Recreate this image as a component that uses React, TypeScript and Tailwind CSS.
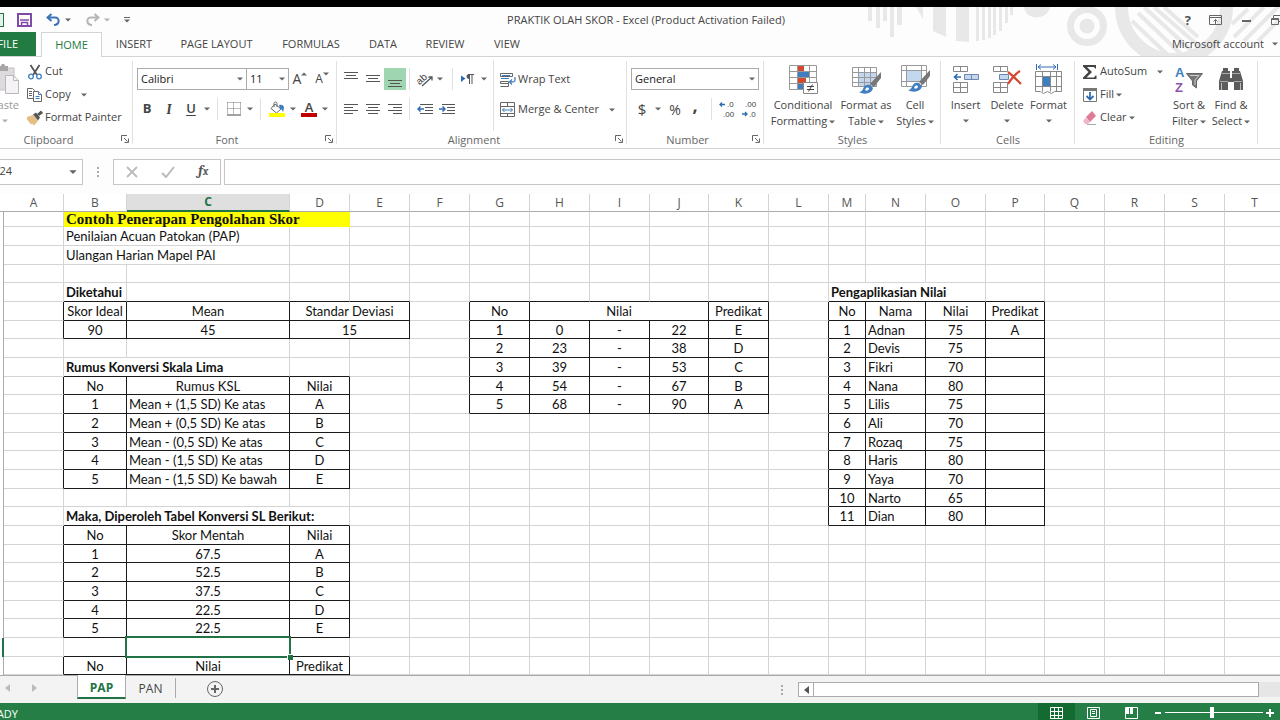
import { useState } from 'react';
import type { ReactNode } from 'react';
import clsx from 'clsx';

/* ---------- sheet data ---------- */

interface Cell {
  text: string;
  span?: number;
  bold?: boolean;
  left?: boolean;
  title?: boolean;
}

interface Box {
  top: number;
  left: number;
  rows: number;
  cols: number;
}

const COLUMNS = [
  { name: 'A', width: 60 },
  { name: 'B', width: 63 },
  { name: 'C', width: 163 },
  { name: 'D', width: 60 },
  { name: 'E', width: 60 },
  { name: 'F', width: 60 },
  { name: 'G', width: 60 },
  { name: 'H', width: 60 },
  { name: 'I', width: 60 },
  { name: 'J', width: 59 },
  { name: 'K', width: 60 },
  { name: 'L', width: 60 },
  { name: 'M', width: 37 },
  { name: 'N', width: 60 },
  { name: 'O', width: 60 },
  { name: 'P', width: 59 },
  { name: 'Q', width: 60 },
  { name: 'R', width: 60 },
  { name: 'S', width: 60 },
  { name: 'T', width: 60 },
];

const ROW_COUNT = 25;
const SELECTED = { row: 24, col: 2 };

const cells: Record<string, Cell> = {};
const boxes: Box[] = [];

const put = (row: number, col: number, cell: Cell) => {
  cells[`${row}:${col}`] = cell;
};

// writes a bordered block; columns listed in leftCols are left aligned below the header
const putTable = (top: number, left: number, rows: string[][], leftCols: number[] = []) => {
  boxes.push({ top, left, rows: rows.length, cols: rows[0].length });
  rows.forEach((row, r) =>
    row.forEach((text, c) => {
      if (text) put(top + r, left + c, { text, left: r > 0 && leftCols.includes(c) });
    })
  );
};

put(1, 1, { text: 'Contoh Penerapan Pengolahan Skor', span: 3, title: true });
put(2, 1, { text: 'Penilaian Acuan Patokan (PAP)', span: 2, left: true });
put(3, 1, { text: 'Ulangan Harian Mapel PAI', span: 2, left: true });
put(5, 1, { text: 'Diketahui', bold: true, left: true });
put(9, 1, { text: 'Rumus Konversi Skala Lima', span: 2, bold: true, left: true });
put(17, 1, { text: 'Maka, Diperoleh Tabel Konversi SL Berikut:', span: 3, bold: true, left: true });
put(5, 12, { text: 'Pengaplikasian Nilai', span: 3, bold: true, left: true });

putTable(6, 1, [
  ['Skor Ideal', 'Mean', '', ''],
  ['90', '45', '', ''],
]);
put(6, 3, { text: 'Standar Deviasi', span: 2 });
put(7, 3, { text: '15', span: 2 });

putTable(
  10,
  1,
  [
    ['No', 'Rumus KSL', 'Nilai'],
    ['1', 'Mean + (1,5 SD) Ke atas', 'A'],
    ['2', 'Mean + (0,5 SD) Ke atas', 'B'],
    ['3', 'Mean - (0,5 SD) Ke atas', 'C'],
    ['4', 'Mean - (1,5 SD) Ke atas', 'D'],
    ['5', 'Mean - (1,5 SD) Ke bawah', 'E'],
  ],
  [1]
);

putTable(18, 1, [
  ['No', 'Skor Mentah', 'Nilai'],
  ['1', '67.5', 'A'],
  ['2', '52.5', 'B'],
  ['3', '37.5', 'C'],
  ['4', '22.5', 'D'],
  ['5', '22.5', 'E'],
]);

putTable(25, 1, [['No', 'Nilai', 'Predikat']]);

putTable(6, 6, [
  ['No', '', '', '', 'Predikat'],
  ['1', '0', '-', '22', 'E'],
  ['2', '23', '-', '38', 'D'],
  ['3', '39', '-', '53', 'C'],
  ['4', '54', '-', '67', 'B'],
  ['5', '68', '-', '90', 'A'],
]);
put(6, 7, { text: 'Nilai', span: 3 });

putTable(
  6,
  12,
  [
    ['No', 'Nama', 'Nilai', 'Predikat'],
    ['1', 'Adnan', '75', 'A'],
    ['2', 'Devis', '75', ''],
    ['3', 'Fikri', '70', ''],
    ['4', 'Nana', '80', ''],
    ['5', 'Lilis', '75', ''],
    ['6', 'Ali', '70', ''],
    ['7', 'Rozaq', '75', ''],
    ['8', 'Haris', '80', ''],
    ['9', 'Yaya', '70', ''],
    ['10', 'Narto', '65', ''],
    ['11', 'Dian', '80', ''],
  ],
  [1]
);

const inBox = (row: number, col: number) =>
  boxes.some((b) => row >= b.top && row < b.top + b.rows && col >= b.left && col < b.left + b.cols);

/* ---------- small parts ---------- */

function Chevron({ className }: { className?: string }) {
  return (
    <svg viewBox="0 0 6 4" className={clsx('h-1 w-1.5 shrink-0 fill-[#666]', className)} aria-hidden="true">
      <path d="M0 0.5h6L3 3.5z" />
    </svg>
  );
}

function Launcher({ label }: { label: string }) {
  return (
    <button type="button" aria-label={label} className="absolute right-1 top-1 h-2 w-2">
      <svg viewBox="0 0 8 8" className="size-2" fill="none" stroke="#666">
        <path d="M.5 6V.5H6M3 3l3.5 3.5M7.5 3.5v4h-4" />
      </svg>
    </button>
  );
}

function Group({
  label,
  width,
  labelPad,
  launcher,
  children,
}: {
  label: string;
  width: string;
  labelPad?: string;
  launcher?: boolean;
  children: ReactNode;
}) {
  return (
    <section aria-label={label} className={clsx('relative flex shrink-0 flex-col', width)}>
      <div className="flex h-[74px] pt-[3px]">{children}</div>
      <div className={clsx('relative h-4 text-center leading-[18px] text-[#666]', labelPad)}>
        {label}
        {launcher && <Launcher label={`${label} settings`} />}
      </div>
      <span className="absolute right-0 top-1 bottom-1 w-px bg-[#e1e1e1]" />
    </section>
  );
}

function ToolButton({ label, width = 'w-[22px]', active, children }: { label: string; width?: string; active?: boolean; children: ReactNode }) {
  return (
    <button
      type="button"
      aria-label={label}
      className={clsx('flex h-[22px] shrink-0 items-center justify-center', width, active && 'bg-[#9fd5b0]')}
    >
      {children}
    </button>
  );
}

function Divider({ className = 'mx-1' }: { className?: string }) {
  return <span className={clsx('h-[22px] w-px shrink-0 bg-[#e1e1e1]', className)} />;
}

function RowButton({ icon, label, gap, arrow }: { icon: ReactNode; label: string; gap?: string; arrow?: boolean }) {
  return (
    <button type="button" className="flex h-[23px] items-center gap-0.5 whitespace-nowrap">
      <span className="flex w-4 shrink-0 justify-center">{icon}</span>
      {label}
      {arrow && <Chevron className={gap} />}
    </button>
  );
}

function BigButton({ icon, lines, width, arrowBelow }: { icon: ReactNode; lines: string[]; width: string; arrowBelow?: boolean }) {
  return (
    <button type="button" className={clsx('flex h-[70px] shrink-0 flex-col items-center whitespace-nowrap', width)}>
      <span className="flex h-[37px] items-center">{icon}</span>
      <span className="h-4 leading-4">{lines[0]}</span>
      <span className="flex h-4 items-center gap-0.5 leading-4">
        {lines[1]}
        <Chevron className={arrowBelow ? '' : 'mt-0.5'} />
      </span>
    </button>
  );
}

function Dropdown({ label, value, options, width }: { label: string; value: string; options: string[]; width: string }) {
  return (
    <div className={clsx('relative', width)}>
      <select
        aria-label={label}
        defaultValue={value}
        className="h-[22px] w-full appearance-none border border-[#ababab] bg-white pl-[3px] text-[11px] leading-4 text-[#222] outline-none"
      >
        {options.map((option) => (
          <option key={option}>{option}</option>
        ))}
      </select>
      <Chevron className="pointer-events-none absolute right-1 top-[9px]" />
    </div>
  );
}

/* bars for the alignment icons, one [x1, x2] pair per line */
function Lines({ rows, top = 1, step = 3 }: { rows: [number, number][]; top?: number; step?: number }) {
  return (
    <svg viewBox="0 0 16 16" className="size-4" stroke="#555" fill="none">
      {rows.map(([from, to], i) => (
        <path key={i} d={`M${from} ${top + i * step + 0.5}H${to}`} />
      ))}
    </svg>
  );
}

function IndentIcon({ right }: { right?: boolean }) {
  return (
    <svg viewBox="0 0 16 14" className="h-3.5 w-4" fill="none" stroke="#555">
      <path d="M3 2.5h13M8 5.5h8M8 8.5h8M3 11.5h13" />
      <path d={right ? 'M0 7h6M3.5 4.5L6 7 3.5 9.5' : 'M7 7H1M3.5 4.5L1 7l2.5 2.5'} stroke="#2f6db0" strokeWidth="1.5" />
    </svg>
  );
}

function DecimalIcon({ increase }: { increase?: boolean }) {
  return (
    <svg viewBox="0 0 16 18" className="h-[18px] w-4" fill="#444" fontSize="8" fontFamily="Liberation Sans, sans-serif">
      <text x={increase ? 8 : 4} y="7">{increase ? '.0' : '.00'}</text>
      <text x={increase ? 4 : 8} y="17">{increase ? '.00' : '.0'}</text>
      <path
        d={increase ? 'M6 4.5H1M3 2.5l-2 2 2 2' : 'M1 14h5M4 12l2 2-2 2'}
        fill="none"
        stroke="#2f6db0"
        strokeWidth="1.3"
      />
    </svg>
  );
}

/* ---------- ribbon icons ---------- */

const icons = {
  cut: (
    <svg viewBox="0 0 16 16" className="size-4" fill="none">
      <path d="M3.5 1L10 11M12.5 1L6 11" stroke="#555" strokeWidth="1.8" />
      <circle cx="4" cy="12.5" r="2.3" stroke="#3f7fc1" strokeWidth="1.3" />
      <circle cx="12" cy="12.5" r="2.3" stroke="#3f7fc1" strokeWidth="1.3" />
    </svg>
  ),
  copy: (
    <svg viewBox="0 0 16 16" className="size-4" fill="#fff" stroke="#666">
      <path d="M.5 1.5h5l2 2v8h-7zM2 4.5h3M2 6.5h3M2 8.5h3" />
      <path d="M6.5 4.5h5l3 3v7h-8z" />
      <path d="M11.5 4.5v3h3M8.5 9.5h4M8.5 11.5h4" stroke="#3f7fc1" />
    </svg>
  ),
  painter: (
    <svg viewBox="0 0 16 16" className="size-4">
      <path d="M0 7l6-2 5 6-4 4.500-2-2-1 1-4-5z" fill="#e6bd83" />
      <path d="M6 4.500l3-2 4 5-2 3z" fill="#555" />
      <path d="M10 4l4-3.500L16 3l-4 3z" fill="#555" />
    </svg>
  ),
  paste: (
    <svg viewBox="0 0 28 32" className="h-8 w-7 shrink-0">
      <path d="M1 5h22v22H1z" fill="#dedbdc" stroke="#c5c2c4" />
      <path d="M7 3h3c0-3 4-3 4 0h3v5H7z" fill="#a9a5a8" />
      <path d="M14.5 12.5h8l5 5v13h-13z" fill="#f6f3f6" stroke="#bbb6bb" />
      <path d="M22.5 12.5v5h5" fill="none" stroke="#bbb6bb" />
    </svg>
  ),
  borders: (
    <svg viewBox="0 0 14 14" className="size-3.5" fill="none" stroke="#777">
      <path d="M.5 .5h13M.5 6.5h13M.5 .5v12M6.5 .5v12M13.5 .5v12" strokeDasharray="1 1" />
      <path d="M0 13h14" stroke="#444" />
    </svg>
  ),
  fill: (
    <svg viewBox="0 0 16 16" className="size-4">
      <path d="M6 3l6 5-4.5 4L2 7.5z" fill="#fff" stroke="#666" />
      <path d="M5 6V2.5C5 .5 8 .5 8 2.5V6" fill="none" stroke="#666" />
      <path d="M10 4c5-1 6 2 4 7-1-2-1-3-3-3z" fill="#3f7fc1" />
      <path d="M0 12h16v4H0z" fill="#ff0" />
    </svg>
  ),
  direction: (
    <svg viewBox="0 0 14 12" className="h-3 w-3.5">
      <path d="M0 2.5l4.5 3L0 9z" fill="#2f6db0" />
      <path d="M8.5 1C4.5 1 4.5 6 8.5 6z" fill="#555" />
      <path d="M8.5 11V1.5M11 11V1.5M7 1.5h6" stroke="#555" fill="none" />
    </svg>
  ),
  wrap: (
    <svg viewBox="0 0 16 16" className="size-4" fill="none" stroke="#666">
      <path d="M.5 1.5h12v3H.5zM.5 9.5h8v2H.5zM.5 14.5h8v-3" />
      <path d="M2 3.5h8M1 6.5h8" stroke="#3f7fc1" />
      <path d="M15 5v3c0 2-1 2-5 2M12 7.5L9.5 10l2.5 2.5" stroke="#3f7fc1" strokeWidth="1.3" />
    </svg>
  ),
  merge: (
    <svg viewBox="0 0 16 16" className="size-4" fill="none" stroke="#666">
      <path d="M.5 .5h14v14H.5zM.5 4.5h14M.5 11.5h14M7.5 .5v4M7.5 11.5v3" />
      <path d="M2.5 8h10M4.5 6l-2 2 2 2M10.5 6l2 2-2 2" stroke="#3f7fc1" />
    </svg>
  ),
  conditional: (
    <svg viewBox="0 0 32 32" className="size-8" fill="none">
      <path d="M2.5 2.5h27v24h-27zM2.5 8.5h27M2.5 14.5h27M2.5 20.5h27M10.5 2.5v24M22.5 2.5v24" stroke="#999" fill="#fff" />
      <path d="M11 3h6v5h-6zM11 15h8v5h-8z" fill="#d1492f" />
      <path d="M11 9h11v5H11zM11 21h5v5h-5z" fill="#3f7fc1" />
      <path d="M16.5 19.5h14v11h-14z" fill="#fff" stroke="#888" />
      <path d="M20 23.5h7M20 26.5h7M25.5 21.5l-4 7" stroke="#444" />
    </svg>
  ),
  formatTable: (
    <svg viewBox="0 0 32 32" className="size-8">
      <path d="M9 10h18v14H9z" fill="#c3d7ee" />
      <path d="M2.5 4.5h24v19h-24zM2.5 9.5h24M2.5 14.5h24M2.5 19.5h24M8.5 4.5v19M14.5 4.5v19M20.5 4.5v19" stroke="#999" fill="none" />
      <path d="M31 9L20 21l4 3 7-9z" fill="#777" />
      <path d="M20 22c-5-1-6 2-7 4-1 2-2 3-4 3 5 3 13 2 14-4z" fill="#3f7fc1" />
      <path d="M16 25c2-1 3 0 3 1-1 2-3 2-4 1z" fill="#fff" />
    </svg>
  ),
  cellStyles: (
    <svg viewBox="0 0 32 32" className="size-8">
      <path d="M2.5 2.5h25v21h-25zM2.5 7.5h25M2.5 18.5h25M7.5 2.5v21M22.5 2.5v21" stroke="#999" fill="none" />
      <path d="M8 8h14v10H8z" fill="#c3d7ee" />
      <path d="M31 7L20 19l4 3 7-9z" fill="#777" />
      <path d="M20 20c-5-1-6 2-7 4-1 2-2 3-4 3 5 3 13 2 14-4z" fill="#3f7fc1" />
      <path d="M16 23c2-1 3 0 3 1-1 2-3 2-4 1z" fill="#fff" />
    </svg>
  ),
  insert: (
    <svg viewBox="0 0 28 30" className="h-[30px] w-7" fill="#fff" stroke="#888">
      <path d="M1.5 2.5h14v5h-14zM8.5 2.5v5M1.5 18.5h14v10h-14zM1.5 23.5h14M8.5 18.5v10" />
      <path d="M12.5 10.5h14v5h-14zM19.5 10.5v5" fill="#c3d7ee" stroke="#6c87b0" />
      <path d="M9 13H3M5.5 10l-3 3 3 3" fill="none" stroke="#2f6db0" strokeWidth="1.6" />
    </svg>
  ),
  remove: (
    <svg viewBox="0 0 30 30" className="size-[30px]" fill="#fff" stroke="#888">
      <path d="M1.5 2.5h14v5h-14zM8.5 2.5v5M1.5 18.5h14v10h-14zM1.5 23.5h14M8.5 18.5v10" />
      <path d="M7.5 10.5h9v5h-9z" fill="#c3d7ee" stroke="#6c87b0" />
      <path d="M16 8c4 3 8 7 13 12M28 7c-5 3-9 8-12 13" fill="none" stroke="#d1492f" strokeWidth="2.2" />
    </svg>
  ),
  format: (
    <svg viewBox="0 0 30 32" className="h-8 w-[30px]" fill="#fff" stroke="#888">
      <path d="M1.5 8.5h26v20h-7l-3 2-4-2-4 2-3-2h-5zM1.5 13.5h26M1.5 23.5h26M8.5 8.5v20M16.5 8.5v20M22.5 8.5v20" />
      <path d="M9 14h7v9H9z" fill="#3f7fc1" stroke="none" />
      <path d="M2.5 1v6M23.5 1v6M4 4h18M7 1.5L4 4l3 2.5M19 1.5L22 4l-3 2.5" fill="none" stroke="#2f6db0" />
    </svg>
  ),
  sum: (
    <svg viewBox="0 0 16 16" className="size-4">
      <path d="M1 1h13v3.5h-1L12 3H5l5 5-5.500 5.500H12l1.500-2h1V15H1v-1.500L6.500 8 1 2.500z" fill="#444" />
    </svg>
  ),
  fillDown: (
    <svg viewBox="0 0 16 16" className="size-4" fill="none">
      <path d="M1.5 1.5h13v13h-13z" fill="#fff" stroke="#777" />
      <path d="M1 1h14v3H1z" fill="#777" />
      <path d="M8 5v8M4.5 9L8 12.5 11.5 9" stroke="#2f6db0" strokeWidth="1.8" />
    </svg>
  ),
  clear: (
    <svg viewBox="0 0 16 16" className="size-4">
      <path d="M10 1l4 5-6 6-4-5z" fill="#e07a99" />
      <path d="M4 7.5L8 12l-2 2H3l-2-3z" fill="#f0b5c6" />
      <path d="M5 14.5h9" stroke="#aaa" />
    </svg>
  ),
  sort: (
    <svg viewBox="0 0 30 30" className="size-[30px]" fontFamily="Liberation Sans, sans-serif" fontWeight="700" fontSize="13">
      <text x="1" y="13" fill="#3f7fc1">A</text>
      <text x="1" y="28" fill="#8c55ad">Z</text>
      <path d="M12.5 9.5h16L22.5 17v7l-4-3v-4z" fill="#777" stroke="#666" />
      <path d="M16 11.5h9L21 16v5" fill="none" stroke="#ccc" />
    </svg>
  ),
  find: (
    <svg viewBox="0 0 28 28" className="size-7" fill="#5c5c5c">
      <path d="M6 3h5v3h2v7h2V6h2V3h5v3h1l3 10v9H17v-8h-6v8H2v-9L5 6h1z" />
      <path d="M3 16.5h8M17 16.5h8M5 8.5h8M15 8.5h8" stroke="#aaa" />
      <path d="M4.5 18v7M23.5 18v7" stroke="#bbb" />
    </svg>
  ),
};

/* ---------- page sections ---------- */

function TitleArt() {
  return (
    <svg viewBox="0 0 440 50" className="absolute right-0 top-0 h-[50px] w-[440px]" fill="#e8e8e8" aria-hidden="true">
      <path d="M28 0h4v14h-4zM36 0h4v21h-4zM43 0h4v14h-4zM50 0h4v30h-4zM57 0h5v18h-5zM76 0h7v12z" />
      <path d="M93 0h13v30l-13-6zM116 0h13v35l-13-1zM136 0h3v34h-3zM142 0h3v33h-3zM148 0h3v31h-3zM153 0h3v28h-3zM159 0h3v24h-3zM165 0h3v16h-3zM170 0h3v8h-3z" />
      <path d="M184 0c2 14 23 14 26 0z" />
      <circle cx="247" cy="19" r="16.5" fill="none" stroke="#e8e8e8" strokeWidth="7" />
      <circle cx="247" cy="19" r="7.5" />
      <circle cx="334" cy="0" r="52.5" fill="none" stroke="#e8e8e8" strokeWidth="13" />
      <path d="M292 14l38 36M298 6l46 44M304 0l50 46M314 0l46 40M324 0l34 30" stroke="#e8e8e8" strokeWidth="4" />
      <path d="M394 30l30-30M404 34l36-36M418 34l22-22M392 17L408 2" stroke="#e8e8e8" strokeWidth="4" />
    </svg>
  );
}

function TitleBar() {
  return (
    <div className="relative flex h-[25px] items-center">
      <div className="flex flex-1 items-center">
        <span className="h-3.5 w-1 border border-l-0 border-[#217346] bg-[#e5f2ea]" />
        <button type="button" aria-label="Save" className="ml-[13px]">
          <svg viewBox="0 0 15 14" className="h-3.5 w-[15px]">
            <path d="M1 1h13v12H1z" fill="#fff" stroke="#8048a8" strokeWidth="2" />
            <path d="M3 7h9M4.5 13V9.5h6V13" fill="none" stroke="#8048a8" strokeWidth="1.5" />
          </svg>
        </button>
        <button type="button" aria-label="Undo" className="ml-3.5 flex items-center gap-1">
          <svg viewBox="0 0 15 13" className="h-[13px] w-[15px]" fill="none" stroke="#3b73b9" strokeWidth="2">
            <path d="M5.5 1l-4 3.5 4 3.5M2 4.5h7c5 0 5 7-1 7.500" />
          </svg>
          <Chevron />
        </button>
        <button type="button" aria-label="Redo" className="ml-3.5 flex items-center gap-1">
          <svg viewBox="0 0 15 13" className="h-[13px] w-[15px]" fill="none" stroke="#b5b5b5" strokeWidth="2">
            <path d="M9.5 1l4 3.5-4 3.5M13 4.5H6c-5 0-5 7 1 7.500" />
          </svg>
          <Chevron className="opacity-50" />
        </button>
        <button type="button" aria-label="Customize Quick Access Toolbar" className="ml-3.5">
          <svg viewBox="0 0 6 6" className="size-1.5">
            <path d="M0 0h6v1H0zM0 2.5h6l-3 3z" fill="#666" />
          </svg>
        </button>
      </div>
      <h1 className="pt-0.5 pl-3 text-[11px] text-[#444]">PRAKTIK OLAH SKOR - Excel (Product Activation Failed)</h1>
      <div className="flex flex-1 items-center justify-end overflow-hidden text-[#555]">
        <button type="button" aria-label="Help" className="mr-[18px] text-[13px] leading-4 font-bold">
          ?
        </button>
        <button type="button" aria-label="Ribbon display options" className="mr-5">
          <svg viewBox="0 0 13 10" className="h-2.5 w-[13px]" fill="none" stroke="#666">
            <path d="M.5 .5h12v9H.5zM.5 2.5h12M6.5 9V4.5M4.5 6.5l2-2 2 2" />
          </svg>
        </button>
        <button type="button" aria-label="Minimize" className="mr-5">
          <svg viewBox="0 0 9 9" className="size-[9px]" stroke="#666" strokeWidth="2">
            <path d="M0 6h9" />
          </svg>
        </button>
        <button type="button" aria-label="Restore" className="w-[9px]">
          <svg viewBox="0 0 10 10" className="size-2.5 max-w-none" fill="none" stroke="#666">
            <path d="M.5 3.5h7v6h-7zM.5 4.5h7M2.5 3V.5h8v6H8" />
          </svg>
        </button>
      </div>
    </div>
  );
}

const TABS = [
  { name: 'INSERT', width: 'w-16' },
  { name: 'PAGE LAYOUT', width: 'w-[101px]' },
  { name: 'FORMULAS', width: 'w-[88px]' },
  { name: 'DATA', width: 'w-14' },
  { name: 'REVIEW', width: 'w-[68px]' },
  { name: 'VIEW', width: 'w-14' },
];

function RibbonTabs() {
  return (
    <nav className="relative flex h-[25px] border-b border-[#d4d4d4] text-[11px]">
      <button type="button" className="mr-[5px] flex w-9 items-center justify-end overflow-hidden bg-[#217b43] pr-[18px] text-white">
        FILE
      </button>
      <button type="button" className="-mb-px w-[61px] border border-b-0 border-[#d4d4d4] bg-white text-[#217b43]">
        HOME
      </button>
      {TABS.map((tab) => (
        <button key={tab.name} type="button" className={clsx('shrink-0 whitespace-nowrap', tab.width)}>
          {tab.name}
        </button>
      ))}
      <button type="button" className="ml-auto flex items-center gap-2 pr-0.5 text-[#444]">
        Microsoft account
        <Chevron />
      </button>
    </nav>
  );
}

function Ribbon() {
  return (
    <div className="flex h-[92px] overflow-hidden border-b border-[#d4d4d4] bg-white text-[11px]">
      <Group label="Clipboard" width="w-[133px]" labelPad="pr-9" launcher>
        <div className="flex w-[19px] shrink-0 justify-end overflow-hidden text-[#999]">
          <button type="button" className="flex h-[70px] shrink-0 flex-col items-center">
            <span className="flex h-[37px] items-center">{icons.paste}</span>
            <span className="h-4 leading-4">Paste</span>
            <span className="flex h-4 items-center">
              <Chevron className="opacity-50" />
            </span>
          </button>
        </div>
        <div className="ml-2 flex flex-col">
          <RowButton icon={icons.cut} label="Cut" />
          <RowButton icon={icons.copy} label="Copy" arrow gap="ml-2" />
          <RowButton icon={icons.painter} label="Format Painter" />
        </div>
      </Group>

      <Group label="Font" width="w-[204px]" labelPad="pr-4" launcher>
        <div className="flex flex-col gap-2 pt-2">
          <div className="flex items-center pl-1">
            <Dropdown label="Font name" value="Calibri" options={['Calibri', 'Arial', 'Times New Roman']} width="w-[110px]" />
            <Dropdown label="Font size" value="11" options={['8', '9', '10', '11', '12', '14']} width="-ml-px w-[43px]" />
            <ToolButton label="Increase font size">
              <span className="text-[14px] leading-4">A</span>
              <Chevron className="mb-2.5 rotate-180 fill-[#2f6db0]" />
            </ToolButton>
            <ToolButton label="Decrease font size">
              <span className="text-[12px] leading-4">A</span>
              <Chevron className="mb-2.5 fill-[#2f6db0]" />
            </ToolButton>
          </div>
          <div className="flex items-center pl-[3px]">
            <ToolButton label="Bold">
              <b className="text-[13px]">B</b>
            </ToolButton>
            <ToolButton label="Italic">
              <i className="font-serif text-[14px] font-semibold">I</i>
            </ToolButton>
            <ToolButton label="Underline">
              <span className="text-[13px] font-semibold underline underline-offset-2">U</span>
            </ToolButton>
            <ToolButton label="Underline style" width="w-2.5">
              <Chevron />
            </ToolButton>
            <Divider className="mx-[5px]" />
            <ToolButton label="Borders">{icons.borders}</ToolButton>
            <ToolButton label="Border style" width="w-2.5">
              <Chevron />
            </ToolButton>
            <Divider className="mx-[5px]" />
            <ToolButton label="Fill color">{icons.fill}</ToolButton>
            <ToolButton label="Fill color options" width="w-2.5">
              <Chevron />
            </ToolButton>
            <ToolButton label="Font color">
              <span className="flex flex-col items-center">
                <span className="h-3 text-[13px] leading-3 font-semibold">A</span>
                <span className="h-1 w-4 bg-[#c00000]" />
              </span>
            </ToolButton>
            <ToolButton label="Font color options" width="w-2.5">
              <Chevron />
            </ToolButton>
          </div>
        </div>
      </Group>

      <Group label="Alignment" width="w-[290px]" labelPad="pr-4" launcher>
        <div className="flex w-[157px] shrink-0 flex-col gap-2 border-r border-[#e1e1e1] pt-2">
          <div className="flex items-center pl-[3px]">
            <ToolButton label="Top align">
              <Lines rows={[[1, 15], [3, 13], [1, 15]]} />
            </ToolButton>
            <ToolButton label="Middle align">
              <Lines rows={[[1, 15], [3, 13], [1, 15]]} top={4} />
            </ToolButton>
            <ToolButton label="Bottom align" active>
              <Lines rows={[[1, 15], [3, 13], [1, 15]]} top={9} />
            </ToolButton>
            <Divider className="mr-1 ml-[3px]" />
            <ToolButton label="Orientation">
              <svg viewBox="0 0 18 16" className="h-4 w-[18px]">
                <text x="0" y="11" fontSize="10" fill="#444" fontFamily="Liberation Sans, sans-serif" transform="rotate(-42 6 8)">
                  ab
                </text>
                <path d="M6 15l10-9M12.5 6H16v3.5" fill="none" stroke="#555" strokeWidth="1.3" />
              </svg>
            </ToolButton>
            <ToolButton label="Orientation options" width="w-2">
              <Chevron />
            </ToolButton>
            <Divider className="ml-2 mr-1" />
            <ToolButton label="Text direction">{icons.direction}</ToolButton>
            <ToolButton label="Text direction options" width="w-2.5">
              <Chevron />
            </ToolButton>
          </div>
          <div className="flex items-center pl-[3px]">
            <ToolButton label="Align left">
              <Lines rows={[[1, 15], [1, 10], [1, 15], [1, 10]]} top={3} />
            </ToolButton>
            <ToolButton label="Center">
              <Lines rows={[[1, 15], [3, 13], [1, 15], [3, 13]]} top={3} />
            </ToolButton>
            <ToolButton label="Align right">
              <Lines rows={[[1, 15], [6, 15], [1, 15], [6, 15]]} top={3} />
            </ToolButton>
            <Divider className="mr-1 ml-[3px]" />
            <ToolButton label="Decrease indent">
              <IndentIcon />
            </ToolButton>
            <ToolButton label="Increase indent">
              <IndentIcon right />
            </ToolButton>
          </div>
        </div>
        <div className="ml-1.5 flex flex-col gap-[7px] pt-2">
          <RowButton icon={icons.wrap} label="Wrap Text" />
          <RowButton icon={icons.merge} label="Merge & Center" arrow gap="ml-2" />
        </div>
      </Group>

      <Group label="Number" width="w-[137px]" labelPad="pr-4" launcher>
        <div className="flex flex-col gap-2 pt-2 pl-1">
          <Dropdown label="Number format" value="General" options={['General', 'Number', 'Currency', 'Percentage']} width="w-32" />
          <div className="flex items-center">
            <ToolButton label="Accounting number format">
              <span className="text-[15px]">$</span>
            </ToolButton>
            <ToolButton label="Accounting options" width="w-2.5">
              <Chevron />
            </ToolButton>
            <ToolButton label="Percent style" width="w-6">
              <span className="text-[14px]">%</span>
            </ToolButton>
            <ToolButton label="Comma style" width="w-4">
              <span className="h-6 text-[18px] leading-4 font-bold">,</span>
            </ToolButton>
            <Divider className="ml-2 mr-1" />
            <ToolButton label="Increase decimal">
              <DecimalIcon increase />
            </ToolButton>
            <ToolButton label="Decrease decimal">
              <DecimalIcon />
            </ToolButton>
          </div>
        </div>
      </Group>

      <Group label="Styles" width="w-[177px]">
        <BigButton icon={icons.conditional} lines={['Conditional', 'Formatting']} width="ml-1 w-[70px]" />
        <BigButton icon={icons.formatTable} lines={['Format as', 'Table']} width="w-14" />
        <BigButton icon={icons.cellStyles} lines={['Cell', 'Styles']} width="w-[42px]" />
      </Group>

      <Group label="Cells" width="w-[134px]">
        <BigButton icon={icons.insert} lines={['Insert', '']} width="ml-1 w-[41px]" arrowBelow />
        <BigButton icon={icons.remove} lines={['Delete', '']} width="w-[42px]" arrowBelow />
        <BigButton icon={icons.format} lines={['Format', '']} width="w-[41px]" arrowBelow />
      </Group>

      <Group label="Editing" width="w-[183px]">
        <div className="ml-[7px] flex w-[86px] flex-col items-start">
          <RowButton icon={icons.sum} label="AutoSum" arrow gap="ml-2" />
          <RowButton icon={icons.fillDown} label="Fill" arrow />
          <RowButton icon={icons.clear} label="Clear" arrow />
        </div>
        <BigButton icon={icons.sort} lines={['Sort &', 'Filter']} width="w-[42px]" />
        <BigButton icon={icons.find} lines={['Find &', 'Select']} width="w-[42px]" />
      </Group>
    </div>
  );
}

function FormulaBar() {
  return (
    <div className="flex h-[45px] items-center">
      <div className="relative h-[26px] w-[83px] overflow-hidden border border-l-0 border-[#c6c6c6] bg-white">
        <div className="flex h-full w-3 items-center justify-end overflow-hidden">
          <input
            aria-label="Name box"
            defaultValue="C24"
            className="w-8 shrink-0 bg-transparent text-right text-[11px] text-[#444] outline-none"
          />
        </div>
        <Chevron className="absolute right-1.5 top-2.5 scale-125" />
      </div>
      <span className="mx-3.5 flex flex-col gap-0.5">
        <i className="size-0.5 bg-[#aaa]" />
        <i className="size-0.5 bg-[#aaa]" />
        <i className="size-0.5 bg-[#aaa]" />
      </span>
      <div className="flex h-[26px] w-[108px] items-center justify-around border border-[#c6c6c6] bg-white">
        <button type="button" aria-label="Cancel">
          <svg viewBox="0 0 12 12" className="size-3" stroke="#bbb" strokeWidth="1.8">
            <path d="M1 1l10 10M11 1L1 11" />
          </svg>
        </button>
        <button type="button" aria-label="Enter">
          <svg viewBox="0 0 14 12" className="h-3 w-3.5" fill="none" stroke="#bbb" strokeWidth="2">
            <path d="M1 7l4 4L13 1" />
          </svg>
        </button>
        <button type="button" aria-label="Insert function" className="font-serif text-[14px] leading-4 font-semibold text-[#555] italic">
          f<span className="text-[11px]">x</span>
        </button>
      </div>
      <input aria-label="Formula bar" className="ml-[3px] h-[26px] min-w-0 flex-1 border border-r-0 border-[#c6c6c6] bg-white px-1 text-[12px] outline-none" />
    </div>
  );
}

function SheetRow({ row }: { row: number }) {
  const items: ReactNode[] = [];

  for (let col = 0; col < COLUMNS.length; ) {
    const cell = cells[`${row}:${col}`];
    const span = cell?.span ?? 1;
    const last = col + span - 1;
    const selected = row === SELECTED.row && col === SELECTED.col;
    const darkRight = inBox(row, last) || inBox(row, last + 1);
    const darkBottom = inBox(row, col) || inBox(row + 1, col);

    items.push(
      <td
        key={col}
        colSpan={span}
        className={clsx(
          'relative border-r border-b p-0 whitespace-nowrap',
          cell?.title ? 'border-[#ff0] bg-[#ff0] pl-0.5 font-["Liberation_Serif",serif] text-[15px] leading-[14px] font-bold' : 'leading-4',
          !cell?.title && (darkRight ? 'border-r-[#1a1a1a]' : 'border-r-[#d4d4d4]'),
          !cell?.title && (darkBottom ? 'border-b-[#1a1a1a]' : 'border-b-[#d4d4d4]'),
          cell?.bold && 'font-bold',
          cell && !cell.title && (cell.left ? 'pl-0.5' : 'text-center')
        )}
      >
        {cell?.text}
        {selected && (
          <span className="absolute -inset-x-0.5 -inset-y-0.5 z-10 border-2 border-[#217346]">
            <span className="absolute -right-1 -bottom-1 size-1.5 border-t border-l border-white bg-[#217346]" />
          </span>
        )}
      </td>
    );
    col += span;
  }

  // three rows take 56px
  const height = row === 1 ? 'h-[15px]' : row % 3 === 1 ? 'h-[18px]' : 'h-[19px]';

  return (
    <tr className={height}>
      <th className={clsx('p-0', row === SELECTED.row ? 'border-r-2 border-[#217346]' : 'border-r border-[#ababab]')} />
      {items}
    </tr>
  );
}

function Sheet() {
  return (
    <div className="overflow-hidden bg-white">
      <table className='w-[1204px] table-fixed border-separate border-spacing-0 font-["Lato",sans-serif] text-[13px] text-[#111]'>
        <colgroup>
          <col style={{ width: 4 }} />
          {COLUMNS.map((column) => (
            <col key={column.name} style={{ width: column.width }} />
          ))}
        </colgroup>
        <thead>
          <tr className='h-[18px] font-["Open_Sans",sans-serif] text-[12px] text-[#555]'>
            <th className="border-b border-[#ababab] p-0" />
            {COLUMNS.map((column, i) => (
              <th
                key={column.name}
                scope="col"
                className={clsx(
                  'border-r border-r-[#d4d4d4] p-0 leading-4',
                  i === SELECTED.col
                    ? 'border-b-2 border-b-[#217346] bg-[#dfdfdf] font-bold text-[#217346]'
                    : 'border-b border-b-[#ababab] font-normal'
                )}
              >
                {column.name}
              </th>
            ))}
          </tr>
        </thead>
        <tbody>
          {Array.from({ length: ROW_COUNT }, (_, i) => (
            <SheetRow key={i} row={i + 1} />
          ))}
        </tbody>
      </table>
    </div>
  );
}

function SheetTabs() {
  const [active, setActive] = useState('PAP');

  return (
    <div className="flex h-7 bg-[#f3f3f3] text-[12px]">
      <div className="flex w-[77px] items-center gap-[22px] border-t border-[#ababab] pb-1 pl-[5px]">
        <button type="button" aria-label="Previous sheet">
          <svg viewBox="0 0 5 8" className="h-2 w-[5px]" fill="#bbb"><path d="M5 0v8L0 4z" /></svg>
        </button>
        <button type="button" aria-label="Next sheet">
          <svg viewBox="0 0 5 8" className="h-2 w-[5px]" fill="#bbb"><path d="M0 0v8l5-4z" /></svg>
        </button>
      </div>
      {['PAP', 'PAN'].map((name) => (
        <button
          key={name}
          type="button"
          onClick={() => setActive(name)}
          className={clsx(
            'w-[49px]',
            active === name
              ? 'mb-1 border-x border-b-2 border-x-[#ababab] border-b-[#217346] bg-white pt-1 font-bold text-[#217346]'
              : 'border-t border-[#ababab] pb-0.5'
          )}
        >
          {name}
        </button>
      ))}
      <div className="flex flex-1 items-center border-t border-[#ababab]">
        <span className="mb-1 h-5 w-px bg-[#ababab]" />
        <button type="button" aria-label="New sheet" className="mb-0.5 ml-[31px]">
          <svg viewBox="0 0 16 16" className="size-4" fill="none" stroke="#666">
            <circle cx="8" cy="8" r="7.5" />
            <path d="M4 8h8M8 4v8" strokeWidth="2" />
          </svg>
        </button>
        <span className="ml-auto mr-[15px] flex flex-col gap-0.5">
          <i className="size-0.5 bg-[#aaa]" />
          <i className="size-0.5 bg-[#aaa]" />
          <i className="size-0.5 bg-[#aaa]" />
        </span>
      </div>
      <div className="flex w-[38%] max-w-[482px] items-center border-t border-[#ababab]">
        <button type="button" aria-label="Scroll left" className="flex h-[15px] w-4 shrink-0 items-center justify-center border border-[#ababab] bg-white">
          <svg viewBox="0 0 5 8" className="h-2 w-[5px]" fill="#555"><path d="M5 0v8L0 4z" /></svg>
        </button>
        <span className="-ml-px h-[15px] flex-1 border border-[#ababab] bg-white" />
        <span className="h-[15px] w-[21px] bg-[#e6e6e6]" />
      </div>
    </div>
  );
}

function StatusBar() {
  return (
    <footer className="flex h-[17px] items-center overflow-hidden bg-[#257e46] text-[11px] text-white">
      <span className="flex w-[18px] justify-end overflow-hidden pt-1 leading-[13px]">READY</span>
      <div className="ml-auto flex h-full items-center">
        <button type="button" aria-label="Normal view" className="flex h-full w-[37px] items-center justify-center bg-[#136b31] pt-0.5">
          <svg viewBox="0 0 13 12" className="h-3 w-[13px]" fill="none" stroke="#fff">
            <path d="M.5 .5h12v11H.5zM.5 4.5h12M.5 8.5h12M4.5 .5v11M8.5 .5v11" />
          </svg>
        </button>
        <button type="button" aria-label="Page layout view" className="flex w-[37px] items-center justify-center pt-0.5">
          <svg viewBox="0 0 13 12" className="h-3 w-[13px]" fill="none" stroke="#fff">
            <path d="M.5 .5h12v11H.5zM3.5 2.5h6v7h-6zM5 4.5h3M5 6.5h3" />
          </svg>
        </button>
        <button type="button" aria-label="Page break view" className="flex w-[38px] items-center justify-center pt-0.5">
          <svg viewBox="0 0 13 12" className="h-3 w-[13px]" fill="none" stroke="#fff">
            <path d="M.5 .5h12v11H.5z" />
            <path d="M1 1h3v6H1zM5 1h3v6H5z" fill="#fff" stroke="none" />
          </svg>
        </button>
        <button type="button" aria-label="Zoom out" className="mt-0.5 ml-1 h-3 w-2">
          <svg viewBox="0 0 8 12" className="h-3 w-2" stroke="#fff" strokeWidth="2"><path d="M1 6h6" /></svg>
        </button>
        <input
          type="range"
          aria-label="Zoom"
          defaultValue={48}
          className="mx-[3px] mt-0.5 h-3 w-[98px] appearance-none bg-transparent [&::-webkit-slider-runnable-track]:h-px [&::-webkit-slider-runnable-track]:bg-white [&::-webkit-slider-thumb]:-mt-[5px] [&::-webkit-slider-thumb]:h-[11px] [&::-webkit-slider-thumb]:w-1 [&::-webkit-slider-thumb]:appearance-none [&::-webkit-slider-thumb]:bg-white"
        />
        <button type="button" aria-label="Zoom in" className="mt-0.5 mr-1.5 h-3 w-2">
          <svg viewBox="0 0 8 12" className="h-3 w-2" stroke="#fff" strokeWidth="2"><path d="M0 6h8M4 2v8" /></svg>
        </button>
      </div>
    </footer>
  );
}

export default function App() {
  return (
    <div className='min-h-screen w-full overflow-hidden bg-[#fdfdfd] font-["Open_Sans",sans-serif] text-[#444]'>
      <div className="h-[7px] bg-black" />
      <header className="relative">
        <TitleArt />
        <TitleBar />
        <RibbonTabs />
      </header>
      <Ribbon />
      <FormulaBar />
      <Sheet />
      <SheetTabs />
      <StatusBar />
    </div>
  );
}
